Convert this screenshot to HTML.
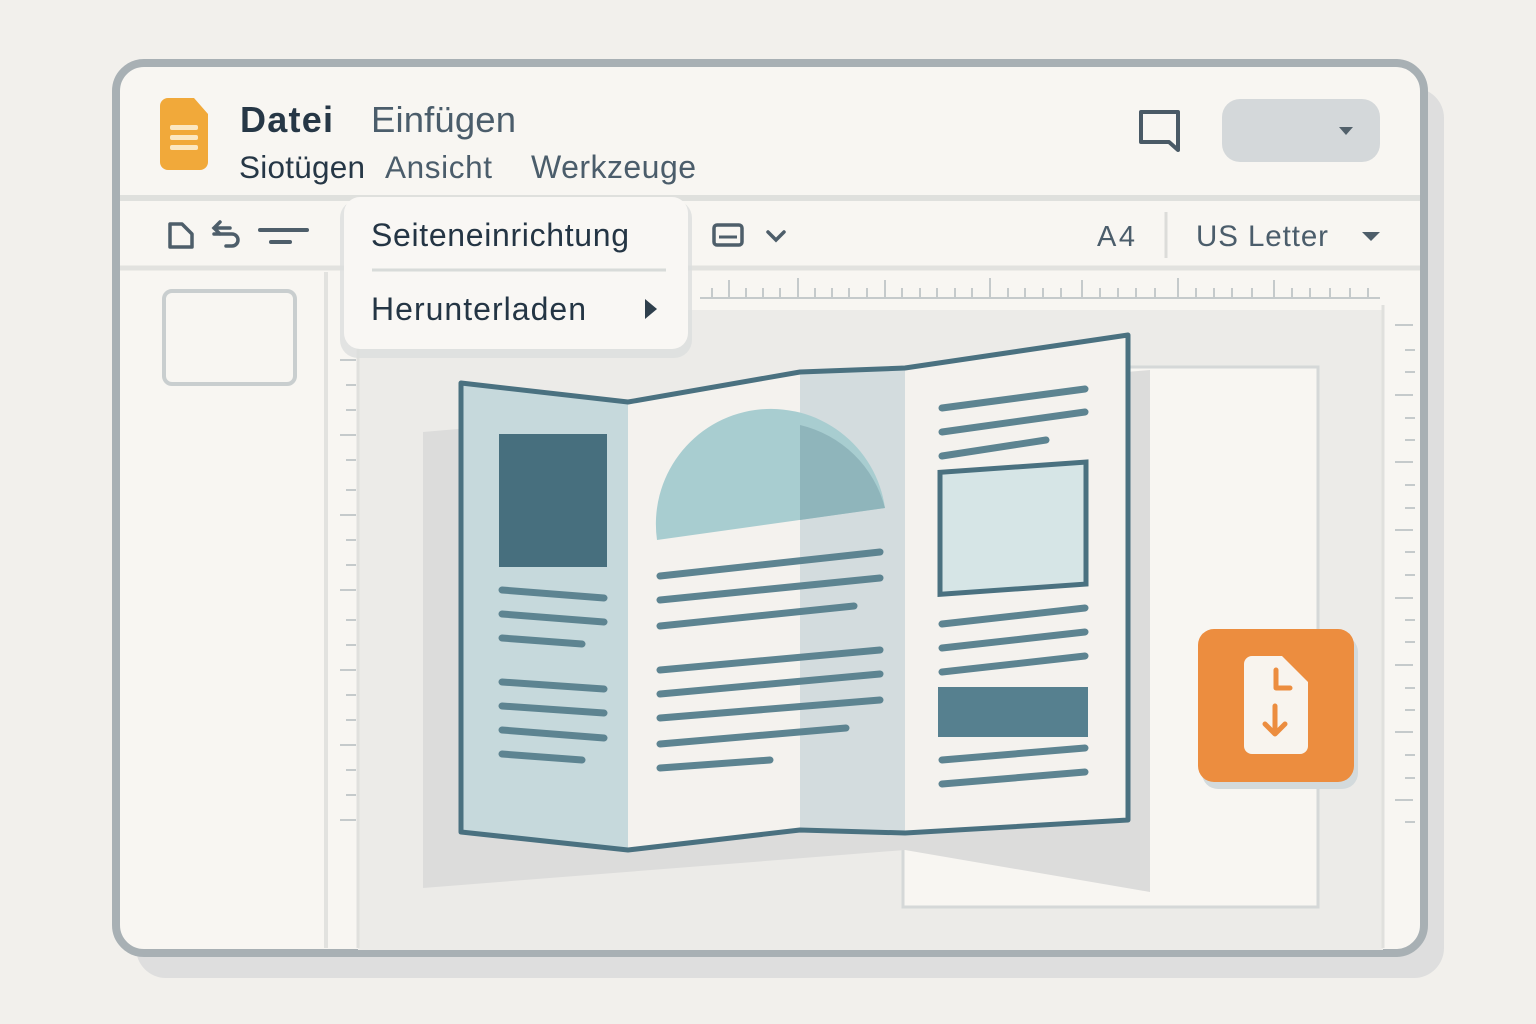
<!DOCTYPE html>
<html><head><meta charset="utf-8"><style>
html,body{margin:0;padding:0;background:#f2f0ec;}
svg{display:block;font-family:"Liberation Sans",sans-serif;}
</style></head><body>
<svg width="1536" height="1024" viewBox="0 0 1536 1024">
<rect width="1536" height="1024" fill="#f2f0ec"/>
<rect x="136" y="88" width="1308" height="890" rx="30" fill="#dedede"/>
<rect x="116" y="63" width="1308" height="890" rx="28" fill="#f8f6f2" stroke="#a8b0b4" stroke-width="8"/>
<line x1="120" y1="198" x2="1420" y2="198" stroke="#dfe0dd" stroke-width="6"/>
<line x1="120" y1="268" x2="1420" y2="268" stroke="#e2e2df" stroke-width="5"/>
<path d="M168 98 h26 l14 16 v48 a8 8 0 0 1 -8 8 h-32 a8 8 0 0 1 -8 -8 v-56 a8 8 0 0 1 8 -8z" fill="#f1a93a"/>
<rect x="170" y="125" width="28" height="5" rx="2" fill="#fbe7c2"/>
<rect x="170" y="135" width="28" height="5" rx="2" fill="#fbe7c2"/>
<rect x="170" y="145" width="28" height="5" rx="2" fill="#fbe7c2"/>
<text x="240" y="132" font-size="36" font-weight="bold" fill="#263746" textLength="93">Datei</text>
<text x="371" y="132" font-size="36.5" fill="#4b5d6b" textLength="145">Einfügen</text>
<text x="239" y="178" font-size="31.5" fill="#263746" textLength="126">Siotügen</text>
<text x="385" y="178" font-size="31.5" fill="#4b5d6b" textLength="107">Ansicht</text>
<text x="531" y="178" font-size="32" fill="#4b5d6b" textLength="165">Werkzeuge</text>
<path d="M1141 112 h37 v38 l-9 -8 h-28 z" fill="none" stroke="#4a5a66" stroke-width="4" stroke-linejoin="round"/>
<rect x="1222" y="99" width="158" height="63" rx="18" fill="#d4d8da"/>
<path d="M1339 127 h14 l-7 8z" fill="#52616b"/>
<path d="M170 224 h12 l10 10 v13 h-22 z" fill="none" stroke="#4e5e6a" stroke-width="3.5" stroke-linejoin="round"/>
<path d="M230 228 h-16 M220 222 l-6 6 6 6 M214 234 h18 a6 6 0 0 1 0 12 h-6" fill="none" stroke="#4e5e6a" stroke-width="3.5" stroke-linecap="round"/>
<line x1="260" y1="230" x2="307" y2="230" stroke="#4e5e6a" stroke-width="4" stroke-linecap="round"/>
<line x1="271" y1="242" x2="290" y2="242" stroke="#4e5e6a" stroke-width="4" stroke-linecap="round"/>
<rect x="714" y="225" width="28" height="20" rx="3" fill="none" stroke="#4e5e6a" stroke-width="3.5"/>
<line x1="719" y1="237" x2="737" y2="237" stroke="#4e5e6a" stroke-width="3"/>
<path d="M768 232 l8 8 8 -8" fill="none" stroke="#4e5e6a" stroke-width="3.5" stroke-linecap="round"/>
<text x="1097" y="246" font-size="29" fill="#4b5d6b" textLength="38">A4</text>
<line x1="1166" y1="212" x2="1166" y2="258" stroke="#dcdcd9" stroke-width="3"/>
<text x="1196" y="246" font-size="29.5" fill="#4b5d6b" textLength="132">US Letter</text>
<path d="M1362 232 h18 l-9 9z" fill="#4e5e6a"/>
<line x1="326" y1="272" x2="326" y2="948" stroke="#e2e2df" stroke-width="4"/>
<rect x="164" y="291" width="131" height="93" rx="8" fill="#f8f6f2" stroke="#c9cecf" stroke-width="4"/>
<rect x="358" y="310" width="1025" height="640" fill="#ecebe8"/>
<line x1="358" y1="305" x2="358" y2="948" stroke="#e0e0dd" stroke-width="3"/>
<line x1="1383" y1="305" x2="1383" y2="948" stroke="#e0e0dd" stroke-width="3"/>
<g stroke="#c5cacb" stroke-width="2">
<line x1="700" y1="298" x2="1380" y2="298"/>
<path d="M712 288v10M729 280v18M746 288v10M763 288v10M780 288v10M798 278v20M815 288v10M832 288v10M849 288v10M867 288v10M885 280v18M902 288v10M920 288v10M937 288v10M955 288v10M972 288v10M990 278v20M1008 288v10M1025 288v10M1043 288v10M1061 288v10M1082 280v18M1100 288v10M1118 288v10M1136 288v10M1155 288v10M1178 278v20M1196 288v10M1214 288v10M1232 288v10M1252 288v10M1274 280v18M1292 288v10M1310 288v10M1330 288v10M1350 288v10M1368 288v10"/>
<path d="M340 360h16M346 385h10M346 410h10M340 435h16M346 460h10M346 490h10M340 515h16M346 540h10M346 565h10M340 590h16M346 620h10M346 645h10M340 670h16M346 695h10M346 720h10M340 745h16M346 770h10M346 795h10M340 820h16"/>
<path d="M1395 325h18M1405 350h10M1405 372h10M1395 395h18M1405 418h10M1405 440h10M1395 462h18M1405 485h10M1405 508h10M1395 530h18M1405 552h10M1405 575h10M1395 598h18M1405 620h10M1405 642h10M1395 665h18M1405 688h10M1405 710h10M1395 732h18M1405 755h10M1405 778h10M1395 800h18M1405 822h10"/>
</g>
<rect x="903" y="367" width="415" height="540" fill="#f8f6f2" stroke="#d5d8d8" stroke-width="3"/>
<polygon points="423,432 1150,370 1150,892 905,850 423,888" fill="#dcdcdb"/>
<polygon points="461,383 628,402 628,850 461,832" fill="#c6d9dc"/>
<polygon points="628,402 800,372 800,830 628,850" fill="#f4f2ee"/>
<polygon points="800,372 905,368 905,833 800,830" fill="#d3dcde"/>
<polygon points="905,368 1128,335 1128,820 905,833" fill="#f4f2ee"/>
<path d="M657 540 A115 115 0 0 1 885 508 Z" fill="#a8cdd0"/>
<path d="M800 425 A115 115 0 0 1 885 508 L800 520 Z" fill="#8fb5bb"/>
<polygon points="461,383 628,402 800,372 905,368 1128,335 1128,820 905,833 800,830 628,850 461,832" fill="none" stroke="#4a7180" stroke-width="5" stroke-linejoin="round"/>
<rect x="499" y="434" width="108" height="133" fill="#476f7e"/>
<g stroke="#5d8491" stroke-width="7" stroke-linecap="round">
<path d="M502 590 L604 598 M502 614 L604 622 M502 638 L582 644 M502 682 L604 689 M502 706 L604 713 M502 730 L604 738 M502 754 L582 760"/>
<path d="M660 576 L880 552 M660 600 L880 578 M660 626 L854 606 M660 670 L880 650 M660 694 L880 674 M660 718 L880 700 M660 744 L846 728 M660 768 L770 760"/>
<path d="M942 408 L1085 389 M942 432 L1085 412 M942 456 L1046 440 M942 624 L1085 608 M942 648 L1085 632 M942 672 L1085 656 M942 760 L1085 748 M942 784 L1085 772"/>
</g>
<rect x="940" y="470" width="146" height="122" fill="#d6e5e6" stroke="#4a7180" stroke-width="5" transform="skewY(-4) translate(0 68)"/>
<rect x="938" y="687" width="150" height="50" fill="#56808f"/>
<rect x="1202" y="636" width="156" height="153" rx="16" fill="#d3dadc"/>
<rect x="1198" y="629" width="156" height="153" rx="16" fill="#ec8d3f"/>
<path d="M1252 656 h30 l26 26 v64 a8 8 0 0 1 -8 8 h-48 a8 8 0 0 1 -8 -8 v-82 a8 8 0 0 1 8 -8z" fill="#f8f4ee"/>
<path d="M1276 670 v18 h14 M1275 706 v26 M1265 724 l10 10 10 -10" fill="none" stroke="#ec8d3f" stroke-width="5" stroke-linecap="round" stroke-linejoin="round"/>
<rect x="340" y="200" width="352" height="158" rx="18" fill="#dcdedd" opacity="0.8"/>
<rect x="344" y="197" width="344" height="152" rx="16" fill="#f9f7f4"/>
<text x="371" y="246" font-size="32" fill="#243544" textLength="258">Seiteneinrichtung</text>
<line x1="372" y1="270" x2="666" y2="270" stroke="#d8dbd9" stroke-width="3"/>
<text x="371" y="320" font-size="32" fill="#243544" textLength="215">Herunterladen</text>
<path d="M645 299 l12 10 -12 10z" fill="#2f3f4c"/>
</svg>
</body></html>
